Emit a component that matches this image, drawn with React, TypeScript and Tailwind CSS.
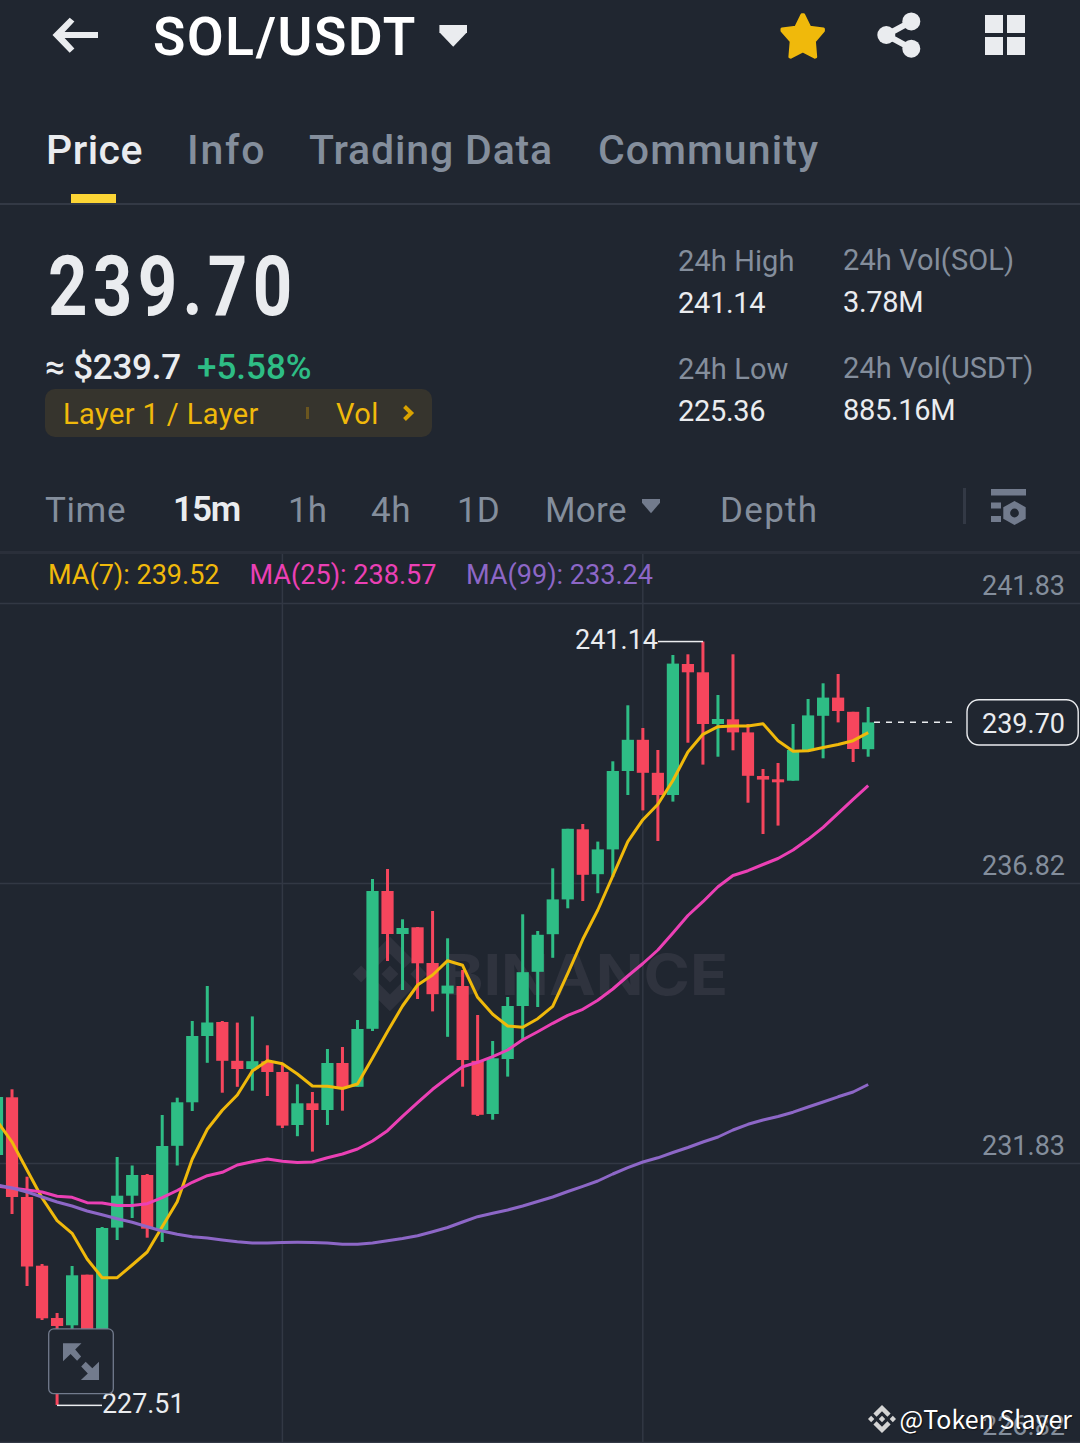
import type { ReactNode } from 'react';

const tabs = [
  { label: 'Price', active: true, slot: 'w-[141px]', tracking: 'tracking-[0.5px]' },
  { label: 'Info', slot: 'w-[122px]', tracking: 'tracking-[1.8px]' },
  { label: 'Trading Data', slot: 'w-[289px]', tracking: 'tracking-[0.85px]' },
  { label: 'Community', slot: 'w-[240px]', tracking: 'tracking-[1.1px]' },
];

const stats = [
  {
    className: 'w-[165px] pt-[42px]',
    items: [
      { label: '24h High', value: '241.14' },
      { label: '24h Low', value: '225.36' },
    ],
  },
  {
    className: 'pt-[41px]',
    items: [
      { label: '24h Vol(SOL)', value: '3.78M' },
      { label: '24h Vol(USDT)', value: '885.16M' },
    ],
  },
];

// [direction, body top, body bottom, high, low] in chart coordinates, 'u' = up, 'd' = down
type Candle = ['u' | 'd', number, number, number, number];

const candles: Candle[] = [
  ['u', 1097, 1155, 1097, 1155],
  ['d', 1097.3, 1197, 1089.3, 1214],
  ['d', 1197, 1266.5, 1176.7, 1286],
  ['d', 1265.7, 1318.3, 1264, 1320],
  ['d', 1318, 1326, 1313, 1405],
  ['u', 1275.3, 1325.3, 1266, 1332],
  ['d', 1274.7, 1340, 1274.7, 1345],
  ['u', 1228, 1340, 1227, 1345],
  ['u', 1195.7, 1227.6, 1157, 1240],
  ['u', 1175, 1195.7, 1165.5, 1218],
  ['d', 1175, 1228.7, 1174, 1237.7],
  ['u', 1146, 1230, 1115, 1242],
  ['u', 1102.3, 1145.8, 1097.7, 1165.5],
  ['u', 1036, 1102.3, 1021, 1111],
  ['u', 1022.5, 1036, 986, 1062.8],
  ['d', 1022, 1060.8, 1021, 1092.7],
  ['d', 1060.8, 1069, 1022.6, 1086.8],
  ['u', 1061.2, 1069, 1016.4, 1090.7],
  ['d', 1061.3, 1072, 1045.3, 1096],
  ['d', 1072, 1125.6, 1064, 1128],
  ['u', 1103.3, 1125, 1084.3, 1136.2],
  ['d', 1103.3, 1110, 1092, 1151.6],
  ['u', 1063, 1110, 1049, 1125],
  ['d', 1063, 1087, 1047, 1110.7],
  ['u', 1029, 1086.8, 1020, 1086.8],
  ['u', 891, 1028.8, 879, 1031],
  ['d', 891, 934, 869, 961],
  ['u', 928, 934, 919.3, 990],
  ['d', 927.3, 963.3, 927, 999],
  ['d', 963, 994.2, 911, 1011.4],
  ['u', 985.6, 993.6, 938.3, 1036.8],
  ['d', 986, 1060, 970, 1086.7],
  ['d', 1060.8, 1114.8, 1015, 1116],
  ['u', 1058.3, 1114, 1041, 1119.7],
  ['u', 1006, 1059, 997, 1076.6],
  ['u', 972.2, 1006, 914.3, 1041],
  ['u', 934.8, 971.8, 931, 1007],
  ['u', 899.4, 934.2, 868.3, 957.8],
  ['u', 828.8, 899.4, 828.8, 908.3],
  ['d', 829.3, 874.8, 824, 901],
  ['u', 849.4, 874.2, 841.6, 893.2],
  ['u', 771, 849.4, 761.3, 877],
  ['u', 739.8, 771, 705.3, 795],
  ['d', 739.8, 772.8, 728, 810.4],
  ['d', 772.8, 795, 750, 841],
  ['u', 663.6, 795, 655, 801.6],
  ['d', 664, 672.3, 654.3, 742.7],
  ['d', 672.3, 724, 641.5, 764.6],
  ['u', 719, 724, 695, 756.7],
  ['d', 719.3, 732.4, 654.3, 750.3],
  ['d', 732.4, 775.8, 724, 802.7],
  ['d', 776, 779.6, 769, 834],
  ['d', 779.3, 782.3, 763, 825.6],
  ['u', 750, 780.7, 724, 780.7],
  ['u', 715.4, 750.5, 699, 750.5],
  ['u', 697.6, 715.8, 683.3, 758.3],
  ['d', 697.6, 711, 674, 722.4],
  ['d', 711.8, 749, 711.8, 762],
  ['u', 722.4, 749.2, 707, 756.7],
];

const ma7 = [
  1121, 1142, 1170, 1198, 1220.7, 1233.3, 1259, 1277.7, 1277.7, 1265, 1252, 1226.7, 1201.7, 1159, 1129.3, 1110.3,
  1095, 1071, 1060.7, 1063.7, 1074, 1086, 1086.3, 1088.5, 1084, 1058, 1031.5, 1006, 985, 975, 960.7, 965.3, 997.3,
  1014.3, 1026, 1027.3, 1018.7, 1006.3, 973.3, 939.3, 910, 876, 841.7, 819.7, 804.3, 780.5, 752, 734.3, 726.7, 726,
  726, 723.7, 740.7, 751.3, 750.7, 747.5, 744.5, 740.7, 732.7,
];

const ma25 = [
  1186, 1188, 1190, 1192, 1196.3, 1197.3, 1202.7, 1202.9, 1205.4, 1205.4, 1203.7, 1197.7, 1190.5, 1182.3, 1175.7,
  1172.3, 1165, 1161.7, 1159, 1161.3, 1162.4, 1162, 1157.7, 1154, 1149, 1141, 1130.7, 1116.3, 1102.7, 1089.3, 1077.7,
  1066.7, 1062.3, 1056.7, 1050, 1039.7, 1031.7, 1023.3, 1015.3, 1009.3, 1000.3, 989, 976, 963.5, 950, 933, 915.5,
  901.7, 886.7, 875.5, 870.7, 864.5, 858.5, 850, 839.3, 827.3, 813.3, 799.3, 785.7,
];

const ma99 = [
  1185, 1188, 1192, 1197, 1202, 1206, 1211, 1214.7, 1218.7, 1222.3, 1226.7, 1231, 1234.3, 1236.7, 1238, 1240, 1241.7,
  1243, 1243, 1242.4, 1242.3, 1242.4, 1243, 1244.3, 1244.3, 1243, 1240.8, 1238.5, 1235.8, 1231.8, 1227.5, 1222, 1216.7,
  1213.3, 1210, 1206, 1201.5, 1197, 1191.5, 1186.3, 1181, 1174, 1167.7, 1162, 1157.8, 1152.5, 1147.5, 1142, 1137, 1130,
  1124.3, 1120, 1116.5, 1112.2, 1107, 1102, 1096.8, 1092, 1084.5,
];

const xAt = (i: number) => -3 + i * 15.02;
const toPoints = (series: number[]) => series.map((y, i) => `${xAt(i).toFixed(1)},${y}`).join(' ');

const BinanceMark = () => (
  <>
    <path d="M38.73 53.2l24.59-24.58 24.6 24.6 14.3-14.31L63.32 0 24.43 38.9z" />
    <path d="M0 63.31L14.3 49l14.3 14.31-14.3 14.3z" />
    <path d="M38.73 73.41L63.32 98l24.6-24.61 14.3 14.31-38.9 38.91-38.89-38.89z" />
    <path d="M98 63.31L112.3 49l14.3 14.31-14.3 14.3z" />
    <path d="M77.83 63.3L63.32 48.78 48.82 63.28l14.5 14.5z" />
  </>
);

const Header = () => (
  <header className="flex h-[130px] items-start pl-[52px] pr-[55px]">
    <svg className="mt-[17px] h-9 w-[47px]" viewBox="0 0 47 36" fill="#eaecef">
      <path d="M17.7 0.7L0.5 18l17.2 17.7 4.7-4.2L12.6 21.1H46v-6.2H12.6L22.4 4.6z" />
    </svg>
    <h1 className="ml-[54px] mt-[11px] w-[286px] whitespace-nowrap text-[53px] font-semibold leading-none tracking-[1.7px] text-white">
      SOL/USDT
    </h1>
    <svg className="mt-[25px] h-[22px] w-7" viewBox="0 0 28 22" fill="#eaecef">
      <path d="M0.4 0h27.6v7.2L14.2 21.7 0.4 7.2z" />
    </svg>
    <div className="ml-auto flex items-start">
      <svg className="mt-3 h-12 w-[46px]" viewBox="780 12 46 48" fill="#f0b90b" stroke="#f0b90b" strokeWidth="3" strokeLinejoin="round">
        <path d="M801.9 14.8h1.8l6 12.4 13.7 1.9v1.6l-9 10.6 1.3 15.6-.8.3-12.1-6.3-12.1 6.3-.8-.3 1.3-15.6-9.2-10.6v-1.6l13.9-1.9z" />
      </svg>
      <svg className="ml-[51px] mt-3 h-[46px] w-11" viewBox="877 12 44 46" fill="#eaecef">
        <path d="M911.5 21.3L886.3 35l25.2 13.7" fill="none" stroke="#eaecef" strokeWidth="6" />
        <circle cx="886.3" cy="35" r="9" />
        <circle cx="911.3" cy="21.4" r="9" />
        <circle cx="911.3" cy="48.7" r="9" />
      </svg>
      <div className="ml-16 mt-[15px] grid grid-cols-2 gap-1">
        {[0, 1, 2, 3].map((i) => (
          <span key={i} className="h-[18px] w-[18px] bg-[#eaecef]" />
        ))}
      </div>
    </div>
  </header>
);

const Tabs = () => (
  <nav className="flex h-[75px] border-b-2 border-[#333945] pl-[46px] text-[41px] font-medium leading-none text-[#848e9c]">
    {tabs.map((tab) => (
      <div key={tab.label} className={`flex h-full flex-col justify-between whitespace-nowrap ${tab.slot} ${tab.tracking}`}>
        <span className={tab.active ? 'text-[#eaecef]' : ''}>{tab.label}</span>
        {tab.active && <span className="ml-[25px] h-[9px] w-[45px] bg-[#fcd535]" />}
      </div>
    ))}
  </nav>
);

const Summary = () => (
  <section className="flex h-[262px] justify-between pl-[45px]">
    <div className="w-[600px] pt-10">
      <div className="ml-[3px] origin-left scale-x-[0.82] text-[84px] font-bold leading-none tracking-[6.5px] text-[#eaecef]">
        239.70
      </div>
      <div className="mt-[21px] flex whitespace-nowrap text-[35px] font-medium leading-none">
        <span className="w-[152px] tracking-[-0.25px] text-[#eaecef]">≈ $239.7</span>
        <span className="text-[#2ebd85]">+5.58%</span>
      </div>
      <div className="mt-1 flex h-12 w-[387px] items-center rounded-[10px] bg-[#36342d] pl-[18px] text-[29px] leading-none text-[#f0b90b]">
        <span className="w-[243px] pt-[2px] tracking-[0.4px]">Layer 1 / Layer</span>
        <span className="h-3 w-[3px] bg-[#6b561f]" />
        <span className="ml-[27px] w-[67px] pt-[2px] tracking-[0.4px]">Vol</span>
        <svg className="h-4 w-3" viewBox="0 0 12 16" fill="none" stroke="#d9a200" strokeWidth="4">
          <path d="M1.5 1.5L8.2 8l-6.7 6.5" />
        </svg>
      </div>
    </div>
    <div className="flex w-[402px]">
      {stats.map((column) => (
        <dl key={column.className} className={`whitespace-nowrap text-[29px] leading-none ${column.className}`}>
          {column.items.map((item) => (
            <div key={item.label} className="mb-[37px]">
              <dt className="tracking-[0.1px] text-[#848e9c]">{item.label}</dt>
              <dd className="mt-[13px] tracking-[-0.3px] text-[#eaecef]">{item.value}</dd>
            </div>
          ))}
        </dl>
      ))}
    </div>
  </section>
);

const Interval = ({ className, children }: { className: string; children: ReactNode }) => (
  <span className={`whitespace-nowrap ${className}`}>{children}</span>
);

const Intervals = () => (
  <div className="flex h-[87px] items-start border-b-[3px] border-[#2a2f3a] pl-[45px] pt-[26px] text-[35px] leading-none text-[#848e9c]">
    <Interval className="w-[128px] tracking-[0.6px]">Time</Interval>
    <Interval className="-mt-px w-[115px] font-semibold tracking-[-1.1px] text-[#eaecef]">15m</Interval>
    <Interval className="w-[83px]">1h</Interval>
    <Interval className="w-[86px] tracking-[0.6px]">4h</Interval>
    <Interval className="w-[88px]">1D</Interval>
    <Interval className="w-[97px] tracking-[0.3px]">More</Interval>
    <svg className="mt-1.5 h-[15px] w-[18px]" viewBox="0 0 18 15" fill="#727b8d">
      <path d="M0 0h18v3.8L9 14.2 0 3.8z" />
    </svg>
    <Interval className="ml-[60px] w-[243px] tracking-[1.3px]">Depth</Interval>
    <span className="-mt-[5px] h-9 w-[3px] bg-[#333945]" />
    <svg className="-mt-1 ml-[25px] h-9 w-[35px]" viewBox="991 489 35 36" fill="#727b8d">
      <path d="M991 489h35v6.5h-35zM991 502.5h10v6h-10zM991 516h10v6h-10z" />
      <path
        fillRule="evenodd"
        d="M1014.5 501l11.2 6.2v11.6l-11.2 6.2-11.2-6.2v-11.6zM1014.5 508.6a4.4 4.4 0 100 8.8 4.4 4.4 0 000-8.8z"
      />
    </svg>
  </div>
);

const Chart = () => (
  <svg className="block h-[889px] w-[1080px]" viewBox="0 554 1080 889" fontFamily="Roboto, sans-serif" fontSize="28">
    <g stroke="#323844" strokeWidth="1.5">
      {[603.4, 883.4, 1163.4, 1442.6].map((y) => (
        <line key={y} x1="0" x2="1080" y1={y} y2={y} />
      ))}
      {[282.4, 642.8].map((x) => (
        <line key={x} x1={x} x2={x} y1="554" y2="1443" />
      ))}
    </g>

    <g fill="#2f333e">
      <g transform="translate(352.7 936.8) scale(0.588)">
        <BinanceMark />
      </g>
      <text
        x="442"
        y="994.5"
        fontFamily="Inter, sans-serif"
        fontSize="57"
        fontWeight="700"
        textLength="286"
        lengthAdjust="spacingAndGlyphs"
      >
        BINANCE
      </text>
    </g>

    {candles.map(([dir, top, bottom, high, low], i) => (
      <g key={i} fill={dir === 'u' ? '#2ebd85' : '#f6465d'}>
        <rect x={xAt(i) - 1.5} y={high} width="3" height={low - high} />
        <rect x={xAt(i) - 6.1} y={top} width="12.2" height={bottom - top} />
      </g>
    ))}

    <g fill="none" strokeWidth="3" strokeLinejoin="round">
      <polyline points={toPoints(ma7)} stroke="#f0b90b" />
      <polyline points={toPoints(ma25)} stroke="#eb40b5" />
      <polyline points={toPoints(ma99)} stroke="#8d67c7" />
    </g>

    <text x="48" y="584" fill="#f0b90b" textLength="171.5" lengthAdjust="spacingAndGlyphs">
      MA(7): 239.52
    </text>
    <text x="249.5" y="584" fill="#eb40b5" textLength="187" lengthAdjust="spacingAndGlyphs">
      MA(25): 238.57
    </text>
    <text x="466" y="584" fill="#8d67c7" textLength="187" lengthAdjust="spacingAndGlyphs">
      MA(99): 233.24
    </text>

    <g fill="#848e9c">
      <text x="982" y="595" textLength="83" lengthAdjust="spacingAndGlyphs">241.83</text>
      <text x="982" y="875" textLength="83" lengthAdjust="spacingAndGlyphs">236.82</text>
      <text x="982" y="1155" textLength="83" lengthAdjust="spacingAndGlyphs">231.83</text>
      <text x="982" y="1435" textLength="83" lengthAdjust="spacingAndGlyphs">226.82</text>
    </g>

    <g fill="#eaecef">
      <text x="575" y="649" textLength="83" lengthAdjust="spacingAndGlyphs">241.14</text>
      <rect x="658" y="640.8" width="45" height="1.5" />
      <text x="102" y="1413" textLength="82.5" lengthAdjust="spacingAndGlyphs">227.51</text>
      <rect x="57" y="1404.6" width="45" height="1.5" />
    </g>

    <line x1="874" x2="953" y1="722.3" y2="722.3" stroke="#eaecef" strokeWidth="1.5" strokeDasharray="6 6" />
    <rect x="967" y="699.8" width="111.2" height="45.2" rx="12" fill="#202630" stroke="#eaecef" strokeWidth="1.4" />
    <text x="982" y="733" fill="#eaecef" textLength="83" lengthAdjust="spacingAndGlyphs">239.70</text>

    <rect x="48.7" y="1328.9" width="64.6" height="64.8" rx="5" fill="#202630" stroke="#727b8d" strokeWidth="1.3" />
    <g fill="#727b8d">
      <path d="M63 1343.3h18.5l-6.3 6.3 5.9 6.8-4 4.4-6.5-6.8-7.6 7.3z" />
      <path d="M99 1379.9H80.9l6.9-6.5-6.6-7 4.5-4.6 6.6 6.5 6.7-6.5z" />
    </g>
  </svg>
);

export default function App() {
  return (
    <main className="relative h-[1443px] w-[1080px] overflow-hidden bg-[#202630] font-['Roboto',sans-serif]">
      <Header />
      <Tabs />
      <Summary />
      <Intervals />
      <Chart />
      <div className="absolute bottom-2.5 right-2 flex items-center gap-1 whitespace-nowrap font-['Noto_Sans_CJK_SC','Noto_Sans',sans-serif] text-[25px] leading-[30px] text-white [text-shadow:1px_1px_1px_rgba(0,0,0,0.6)]">
        <svg className="h-7 w-7" viewBox="0 0 126.61 126.61" fill="#d4d4d4">
          <BinanceMark />
        </svg>
        <span className="-mt-[3px]">@Token Slayer</span>
      </div>
    </main>
  );
}
